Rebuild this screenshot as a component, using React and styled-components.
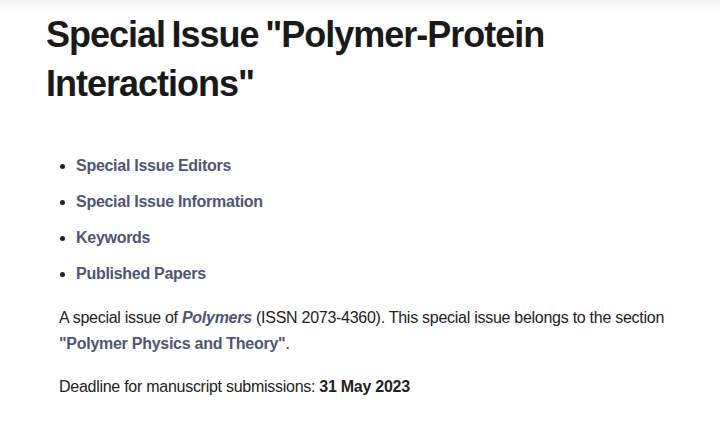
import React from 'react'
import styled, { createGlobalStyle } from 'styled-components'

const GlobalStyle = createGlobalStyle`
	html, body {
		margin: 0;
		padding: 0;
		background: #fff;
		font-family: 'Liberation Sans', Arial, sans-serif;
		color: #222;
	}
`

const links = ['Special Issue Editors', 'Special Issue Information', 'Keywords', 'Published Papers']

const App = () => {
	return (
		<>
			<GlobalStyle />
			<Page>
				<Title>Special Issue "Polymer-Protein Interactions"</Title>
				<Body>
					<LinkList>
						{links.map((l) => (
							<LinkItem key={l}>
								<Link href="#">{l}</Link>
							</LinkItem>
						))}
					</LinkList>
					<Text>
						A special issue of <Journal href="#">Polymers</Journal> (ISSN 2073-4360). This special issue belongs to the
						section <Link href="#">"Polymer Physics and Theory"</Link>.
					</Text>
					<Text>
						Deadline for manuscript submissions: <b>31 May 2023</b>
					</Text>
				</Body>
			</Page>
		</>
	)
}

export default App

const Page = styled.div`
	min-height: 436px;
	box-sizing: border-box;
	padding: 10px 40px 0 46px;
	background: linear-gradient(to bottom, #f2f2f2 0px, #fff 12px);
`
const Title = styled.h1`
	margin: 0;
	width: 540px;
	font-size: 36px;
	line-height: 49px;
	font-weight: bold;
	color: #1a1a1a;
	letter-spacing: -1px;
	word-spacing: -2.5px;
`
const Body = styled.div`
	padding-left: 13px;
	padding-top: 48px;
`
const LinkList = styled.ul`
	margin: 0 0 21px;
	padding-left: 17px;
`
const LinkItem = styled.li`
	font-size: 16px;
	line-height: 20px;
	margin-bottom: 16px;
	color: #222;
	letter-spacing: -0.28px;
`
const Link = styled.a`
	color: #4f5671;
	font-weight: bold;
	text-decoration: none;
`
const Journal = styled(Link)`
	font-style: italic;
`
const Text = styled.p`
	margin: 0 0 17px;
	font-size: 16px;
	line-height: 26px;
	color: #222;
	letter-spacing: -0.27px;
`
